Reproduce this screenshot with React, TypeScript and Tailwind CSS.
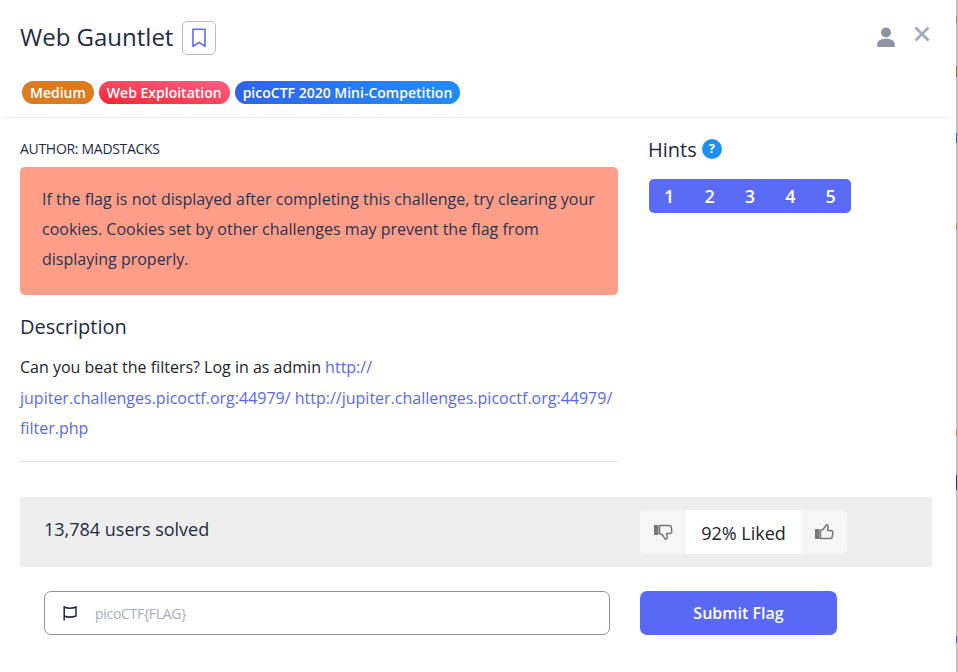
import React from "react";

function ThumbDown() {
  return (
    <svg width="20" height="18" viewBox="0 0 20 18" fill="none">
      <rect x="1" y="2" width="4.5" height="10" fill="#777" />
      <path d="M6.5 2.5 H16 Q18.2 2.5 18.4 5 L18.8 8.5 Q18.8 10.5 16.5 10.5 H13.5 L14.2 14 Q14.2 16.3 12.4 16.3 L9.5 12 L6.5 10.5 Z" stroke="#777" strokeWidth="1.5" strokeLinejoin="round" />
    </svg>
  );
}

function ThumbUp() {
  return (
    <svg width="20" height="18" viewBox="0 0 20 18" fill="none">
      <rect x="1" y="6" width="4.5" height="10" fill="#777" />
      <path d="M6.5 7.5 L9.5 6 L12.4 1.7 Q14.2 1.7 14.2 4 L13.5 7.5 H16.5 Q18.8 7.5 18.8 9.5 L18.4 13 Q18.2 15.5 16 15.5 H6.5 Z" stroke="#777" strokeWidth="1.5" strokeLinejoin="round" />
    </svg>
  );
}

const marks = [
  { top: 16, height: 7, color: "#c8803a" },
  { top: 66, height: 11, color: "#a8683a" },
  { top: 133, height: 10, color: "#2a62c0" },
  { top: 223, height: 7, color: "#c8803a" },
  { top: 429, height: 7, color: "#c8803a" },
  { top: 475, height: 15, color: "#4a2a55" },
  { top: 636, height: 7, color: "#3a6ac0" },
];

export default function App() {
  return (
    <div className="relative w-[958px] h-[672px] overflow-hidden bg-white font-['Open_Sans','Noto_Sans',sans-serif] text-[#1f2a44]">
      <div className="w-[956px] h-[672px] flex flex-col">
        <header className="mx-[5px] w-[942px] h-[118px] shrink-0 border-b border-[#e9ecef] pl-[15px] pr-[15px]">
          <div className="flex items-center justify-between pt-[18px] h-[57px]">
            <div className="flex items-center gap-[9px]">
              <h1 className="text-[24px] leading-[32px] font-normal text-[#1f2a44] mt-[-2px]">Web Gauntlet</h1>
              <button className="w-[34px] h-[34px] flex items-center justify-center rounded-[5px] border border-[#b8bcc6]">
                <svg width="14" height="20" viewBox="0 0 14 20" fill="none">
                  <path d="M1 1.2 H13 V18.2 L7 14.4 L1 18.2 Z" stroke="#5c6bf7" strokeWidth="1.6" strokeLinejoin="round" />
                </svg>
              </button>
            </div>
            <div className="flex items-center gap-[19px] pr-[2px] mt-[-4px]">
              <svg width="18" height="20" viewBox="0 0 18 20" fill="#8f94a3" className="mt-[3px]">
                <circle cx="9" cy="5.5" r="5" />
                <path d="M0.2 20 V17.2 C0.2 13.8 4 11.8 9 11.8 C14 11.8 17.8 13.8 17.8 17.2 V20 Z" />
              </svg>
              <svg width="16" height="16" viewBox="0 0 16 16" fill="none" className="mt-[-4px]">
                <path d="M1.5 1.5 L14.5 14.5 M14.5 1.5 L1.5 14.5" stroke="#a4aabd" strokeWidth="2.8" />
              </svg>
            </div>
          </div>
          <div className="flex items-center gap-[5px] mt-[24px] pl-[2px] text-[14px] leading-[23px] font-semibold text-white">
            <span className="h-[23px] px-[8px] rounded-full bg-[#dc7b20]">Medium</span>
            <span className="h-[23px] px-[8px] rounded-full bg-gradient-to-tr from-[#f5222d] to-[#ff5c85]">Web Exploitation</span>
            <span className="h-[23px] px-[8px] rounded-full bg-gradient-to-r from-[#2f63eb] to-[#1f8efa]">picoCTF 2020 Mini-Competition</span>
          </div>
        </header>

        <main className="flex pl-[20px] flex-1 min-h-0">
          <section className="w-[598px] shrink-0">
            <p className="mt-[21px] text-[14px] leading-[20px] tracking-[-0.3px]">AUTHOR: MADSTACKS</p>
            <div className="mt-[8px] h-[128px] rounded-[5px] bg-[#ff9e88] pl-[22px] pr-[20px] pt-[17px] text-[16px] leading-[30px] text-[#2a3350]">
              If the flag is not displayed after completing this challenge, try clearing your cookies. Cookies set by other challenges may prevent the flag from displaying properly.
            </div>
            <h2 className="mt-[18px] text-[20px] leading-[28px] font-normal">Description</h2>
            <p className="mt-[11px] pb-[17px] border-b border-[#e3e5e8] text-[16px] leading-[30.5px] text-[#212529]">
              Can you beat the filters? Log in as admin{" "}
              <a className="text-[#5a68f6]">http://<wbr />jupiter.challenges.picoctf.org:44979/</a>{" "}
              <a className="text-[#5a68f6]">http://jupiter.challenges.picoctf.org:44979/<wbr />filter.php</a>
            </p>
          </section>
          <aside className="ml-[31px]">
            <div className="mt-[18px] flex items-center gap-[5px] ml-[-1px]">
              <h2 className="text-[20px] leading-[28px] font-normal">Hints</h2>
              <span className="w-[20px] h-[20px] mt-[-2px] rounded-full bg-[#1d90f5] flex items-center justify-center text-[13px] font-bold text-white">?</span>
            </div>
            <div className="mt-[15px] flex w-[202px] h-[34px] rounded-[5px] bg-[#5a6bf6] text-white text-[18px] font-semibold leading-[34px]">
              <span className="w-[40.4px] text-center">1</span>
              <span className="w-[40.4px] text-center">2</span>
              <span className="w-[40.4px] text-center">3</span>
              <span className="w-[40.4px] text-center">4</span>
              <span className="w-[40.4px] text-center">5</span>
            </div>
          </aside>
        </main>

        <div className="mx-[20px] w-[912px] h-[70px] shrink-0 bg-[#eeeeee] flex items-start">
          <span className="w-[620px] pl-[24px] pt-[19px] text-[18px] leading-[26px]">13,784 users solved</span>
          <div className="mt-[13px] flex h-[44px] w-[207px] rounded-[5px] overflow-hidden bg-[#f6f6f6]">
            <span className="w-[46px] flex items-center justify-center"><ThumbDown /></span>
            <span className="w-[115px] bg-white flex items-center justify-center pt-[2px] text-[18px] text-[#212529]">92% Liked</span>
            <span className="w-[46px] flex items-center justify-center"><ThumbUp /></span>
          </div>
        </div>

        <div className="flex shrink-0 h-[105px] pl-[44px] pt-[24px] items-start">
          <div className="w-[566px] h-[44px] rounded-[7px] border border-[#8e919c] flex items-center pl-[18px]">
            <svg width="14" height="15" viewBox="0 0 14 15" fill="none">
              <path d="M1.2 14.5 V1 C4 2.6 9.5 2.6 13 1 V10 C9.5 11.2 4 11.2 1.2 10" stroke="#1f2a44" strokeWidth="1.5" />
            </svg>
            <span className="ml-[18px] text-[14px] tracking-[-0.3px] text-[#a9acb6]">picoCTF{"{FLAG}"}</span>
          </div>
          <button className="ml-[30px] w-[197px] h-[44px] rounded-[7px] bg-[#5a68f6] text-white text-[16px] font-semibold">Submit Flag</button>
        </div>
      </div>
      <div className="absolute right-0 top-0 w-[2px] h-full bg-[#c2c2c8]" />
      {marks.map((m) => (
        <div key={m.top} className="absolute right-[1px] w-[1px]" style={{ top: m.top, height: m.height, backgroundColor: m.color }} />
      ))}
    </div>
  );
}
